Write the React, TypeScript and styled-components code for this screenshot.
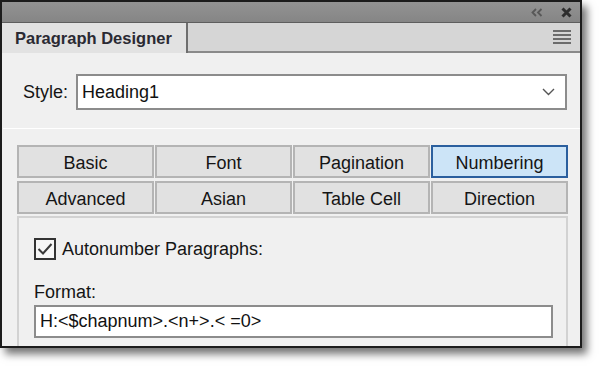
import styled, { createGlobalStyle } from "styled-components";

const GlobalStyle = createGlobalStyle`
  html, body {
    margin: 0;
    padding: 0;
    background: #ffffff;
  }
  body {
    width: 600px;
    height: 366px;
    overflow: hidden;
    font-family: "Liberation Sans", Arial, sans-serif;
  }
`;

const Window = styled.div`
  box-sizing: border-box;
  width: 582px;
  height: 348px;
  border: 2px solid #1c1c1c;
  background: #f0f0f0;
  box-shadow: 5px 6px 8px rgba(0, 0, 0, 0.55);
  display: flex;
  flex-direction: column;
  overflow: hidden;
  color: #151515;
`;

const TitleBar = styled.div`
  height: 20px;
  flex: none;
  background: linear-gradient(#939393, #858585);
  border-bottom: 1px solid #5e5e5e;
  display: flex;
  align-items: center;
  justify-content: flex-end;
  gap: 18px;
  padding-right: 8px;
`;

const TabStrip = styled.div`
  height: 30px;
  flex: none;
  display: flex;
  background: #d6d6d6;
`;

const PanelTab = styled.div`
  width: 186px;
  flex: none;
  background: #e2e2e2;
  border-right: 2px solid #6e6e6e;
  display: flex;
  align-items: center;
  padding-left: 13px;
  box-sizing: border-box;
  font-weight: bold;
  font-size: 16.5px;
  color: #2a2a33;
`;

const StripRest = styled.div`
  flex: 1;
  border-bottom: 2px solid #8a8a8a;
  display: flex;
  align-items: center;
  justify-content: flex-end;
  padding-right: 9px;
`;

const StyleRow = styled.div`
  display: flex;
  align-items: center;
  gap: 8px;
  padding: 21px 13px 0 21px;
`;

const Label = styled.span`
  font-size: 18px;
`;

const Field = styled.div<{ $height: number }>`
  box-sizing: border-box;
  height: ${(p) => p.$height}px;
  flex: 1;
  background: #ffffff;
  border: 2px solid #8c8c8c;
  display: flex;
  align-items: center;
  padding: 0 4px;
  font-size: 18px;
  color: #111;
`;

const Chevron = styled.svg`
  margin-left: auto;
  margin-right: 6px;
`;

const Separator = styled.div`
  margin: 18px 0 0 1px;
  height: 1px;
  background: #a9a9a9;
  border-bottom: 1px solid #ffffff;
`;

const TabsArea = styled.div`
  padding: 16px 12px 0 15px;
`;

const TabGrid = styled.div`
  display: grid;
  grid-template-columns: repeat(4, 1fr);
  grid-auto-rows: 33px;
  column-gap: 1px;
  row-gap: 3px;
`;

const TabButton = styled.div<{ $active?: boolean }>`
  box-sizing: border-box;
  display: flex;
  align-items: center;
  justify-content: center;
  padding-top: 3px;
  font-size: 18px;
  background: ${(p) => (p.$active ? "#cce4f7" : "#e1e1e1")};
  border: 2px solid ${(p) => (p.$active ? "#2b5f9e" : "#b4b4b4")};
`;

const Panel = styled.div`
  margin-top: 2px;
  border: 2px solid #d2d2d2;
  border-bottom: none;
  height: 200px;
  padding: 19px 13px 0 15px;
`;

const CheckRow = styled.div`
  display: flex;
  align-items: center;
  gap: 6px;
`;

const CheckBox = styled.div`
  box-sizing: border-box;
  width: 22px;
  height: 22px;
  border: 2px solid #333;
  background: #f7f7f7;
  display: flex;
  align-items: center;
  justify-content: center;
`;

const CheckText = styled(Label)`
  padding-top: 2px;
`;

const FormatLabel = styled(Label)`
  display: block;
  margin-top: 22px;
`;

const FormatField = styled(Field)`
  margin-top: 2px;
`;

export default function App() {
  const tabs = [
    "Basic",
    "Font",
    "Pagination",
    "Numbering",
    "Advanced",
    "Asian",
    "Table Cell",
    "Direction",
  ];
  return (
    <>
      <GlobalStyle />
      <Window>
        <TitleBar>
          <svg width="12" height="9" viewBox="0 0 12 9">
            <path d="M5 1 L1.5 4.5 L5 8 M10.5 1 L7 4.5 L10.5 8" fill="none" stroke="#585858" strokeWidth="1.8" />
          </svg>
          <svg width="11" height="11" viewBox="0 0 11 11">
            <path d="M1.5 1.5 L9.5 9.5 M9.5 1.5 L1.5 9.5" fill="none" stroke="#2e2e2e" strokeWidth="3" />
          </svg>
        </TitleBar>
        <TabStrip>
          <PanelTab>Paragraph Designer</PanelTab>
          <StripRest>
            <svg width="18" height="14" viewBox="0 0 18 14">
              <path d="M0 1 H18 M0 5 H18 M0 9 H18 M0 13 H18" stroke="#4a4a4a" strokeWidth="1.6" />
            </svg>
          </StripRest>
        </TabStrip>
        <StyleRow>
          <Label>Style:</Label>
          <Field $height={36}>
            Heading1
            <Chevron width="13" height="8" viewBox="0 0 13 8">
              <path d="M1 1 L6.5 6.5 L12 1" fill="none" stroke="#555" strokeWidth="1.4" />
            </Chevron>
          </Field>
        </StyleRow>
        <Separator />
        <TabsArea>
          <TabGrid>
            {tabs.map((t) => (
              <TabButton key={t} $active={t === "Numbering"}>
                {t}
              </TabButton>
            ))}
          </TabGrid>
          <Panel>
            <CheckRow>
              <CheckBox>
                <svg width="16" height="14" viewBox="0 0 16 14">
                  <path d="M1.5 7 L6 11.5 L14.5 2" fill="none" stroke="#3a3a3a" strokeWidth="2" />
                </svg>
              </CheckBox>
              <CheckText>Autonumber Paragraphs:</CheckText>
            </CheckRow>
            <FormatLabel>Format:</FormatLabel>
            <FormatField $height={33}>H:&lt;$chapnum&gt;.&lt;n+&gt;.&lt; =0&gt;</FormatField>
          </Panel>
        </TabsArea>
      </Window>
    </>
  );
}
